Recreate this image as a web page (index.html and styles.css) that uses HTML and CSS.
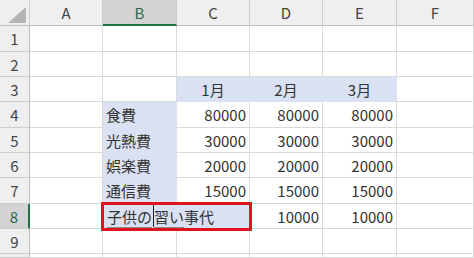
FILE: index.html
```html
<!DOCTYPE html>
<html lang="ja">
<head>
<meta charset="utf-8">
<link rel="stylesheet" href="styles.css">
</head>
<body>
<div class="sheet">
  <div class="ch corner"><div class="tri"></div></div>
  <div class="ch">A</div>
  <div class="ch sel-col">B</div>
  <div class="ch">C</div>
  <div class="ch">D</div>
  <div class="ch">E</div>
  <div class="ch">F</div>

  <div class="rh">1</div>
  <div class="c"></div><div class="c"></div><div class="c"></div><div class="c"></div><div class="c"></div><div class="c"></div>

  <div class="rh">2</div>
  <div class="c"></div><div class="c"></div><div class="c"></div><div class="c"></div><div class="c"></div><div class="c"></div>

  <div class="rh">3</div>
  <div class="c"></div><div class="c"></div>
  <div class="c fill ctr">1月</div><div class="c fill ctr">2月</div><div class="c fill ctr">3月</div>
  <div class="c"></div>

  <div class="rh">4</div>
  <div class="c"></div><div class="c fill txt">食費</div>
  <div class="c num">80000</div><div class="c num">80000</div><div class="c num">80000</div>
  <div class="c"></div>

  <div class="rh">5</div>
  <div class="c"></div><div class="c fill txt">光熱費</div>
  <div class="c num">30000</div><div class="c num">30000</div><div class="c num">30000</div>
  <div class="c"></div>

  <div class="rh">6</div>
  <div class="c"></div><div class="c fill txt">娯楽費</div>
  <div class="c num">20000</div><div class="c num">20000</div><div class="c num">20000</div>
  <div class="c"></div>

  <div class="rh">7</div>
  <div class="c"></div><div class="c fill txt">通信費</div>
  <div class="c num">15000</div><div class="c num">15000</div><div class="c num">15000</div>
  <div class="c"></div>

  <div class="rh sel-row">8</div>
  <div class="c"></div>
  <div class="c editor"><span class="comp">子供の</span><span class="caret"></span><span class="comp">習い</span>事代</div>
  <div class="c num">10000</div><div class="c num">10000</div>
  <div class="c"></div>

  <div class="rh">9</div>
  <div class="c"></div><div class="c"></div><div class="c"></div><div class="c"></div><div class="c"></div><div class="c"></div>

  <div class="rh"></div>
  <div class="c"></div><div class="c"></div><div class="c"></div><div class="c"></div><div class="c"></div><div class="c"></div>
</div>
</body>
</html>
```
FILE: styles.css
```css
html, body {
  margin: 0;
  padding: 0;
  background: #ffffff;
  overflow: hidden;
}

body {
  width: 474px;
  height: 258px;
  font-family: "Noto Sans CJK JP", "Noto Sans", sans-serif;
  color: #333333;
}

.sheet {
  display: grid;
  grid-template-columns: 30px 73px 74px 73px 73px 74px 1fr;
  grid-template-rows: 26px 26px 25px 25px 26px 25px 25px 26px 25px 25px 4px;
  width: 474px;
  height: 258px;
  overflow: hidden;
}

.ch,
.rh,
.c {
  box-sizing: border-box;
  display: flex;
  align-items: center;
  font-size: 15px;
  line-height: 1;
  white-space: nowrap;
}

.ch {
  justify-content: center;
  background: #efefef;
  border-right: 1px solid #cdcdcd;
  border-bottom: 1px solid #bdbdbd;
  color: #444444;
}

.corner {
  justify-content: flex-end;
  align-items: flex-end;
  padding: 0 3px 2px 0;
}

.tri {
  width: 18px;
  height: 16px;
  background: #b4b4b4;
  clip-path: polygon(100% 0, 100% 100%, 0 100%);
}

.sel-col {
  background: #d3d3d3;
  color: #2c6a4a;
  border-bottom: 2px solid #217346;
}

.rh {
  justify-content: center;
  background: #efefef;
  border-right: 1px solid #bdbdbd;
  border-bottom: 1px solid #cdcdcd;
  color: #444444;
}

.sel-row {
  background: #d3d3d3;
  color: #2c6a4a;
  border-right: 2px solid #217346;
}

.c {
  border-right: 1px solid #dadada;
  border-bottom: 1px solid #dadada;
  background: #ffffff;
  color: #333333;
}

.fill {
  background: #d9e1f2;
  border-color: #d9e1f2;
}

.ctr {
  justify-content: center;
}

.txt {
  padding-left: 3px;
}

.num {
  justify-content: flex-end;
  padding-right: 3px;
}

.editor {
  grid-column: span 2;
  position: relative;
  z-index: 1;
  background: #d9e1f2;
  border-color: #d9e1f2;
  padding-left: 4px;
  outline: 3px solid #e0141e;
  outline-offset: -1px;
  color: #333333;
}

.comp {
  text-decoration: underline;
  text-decoration-color: #8c8c8c;
  text-underline-offset: 4px;
  text-decoration-thickness: 1px;
}

.caret {
  display: inline-block;
  width: 0;
  height: 22px;
  border-left: 1px solid #222222;
  margin: 0 0 0 1px;
}
```
